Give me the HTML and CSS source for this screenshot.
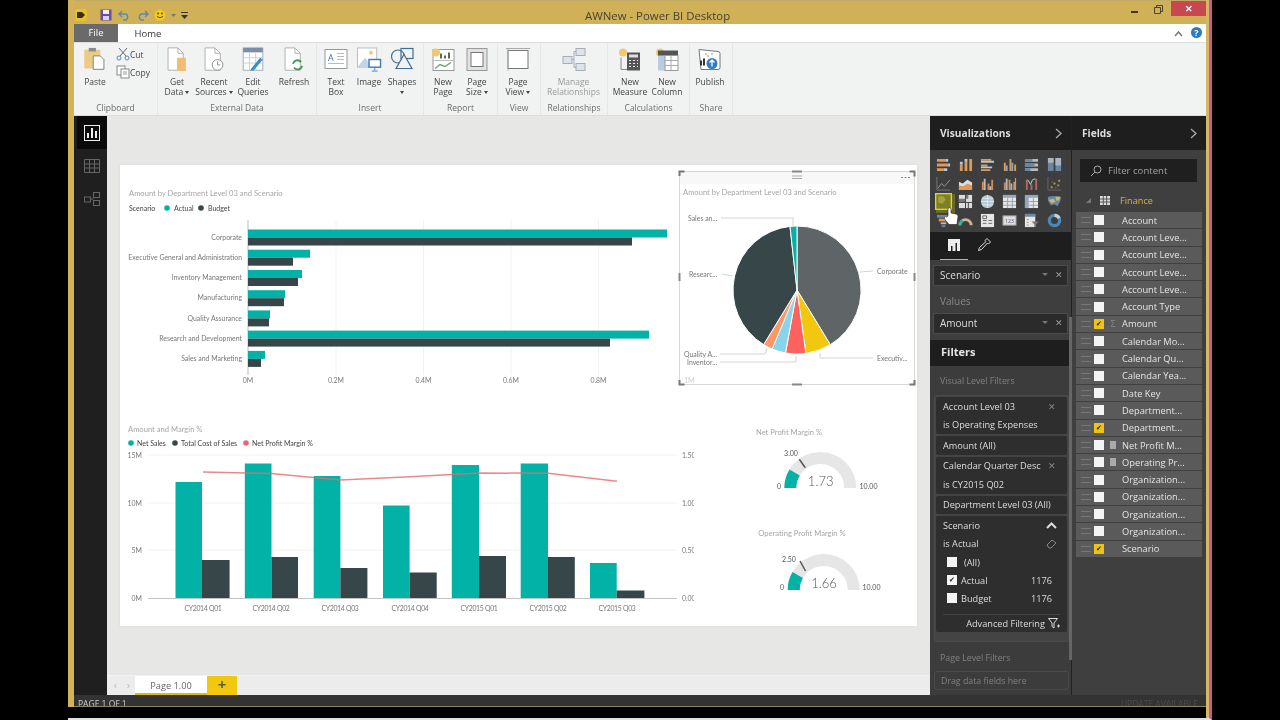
FILE: index.html
```html
<!DOCTYPE html>
<html lang="en">
<head>
  <meta charset="UTF-8">
  <title>AWNew - Power BI Desktop</title>
  <link rel="stylesheet" href="styles.css">
</head>
<body>
<div class="shell">
  <div class="frame">

    <header class="titlebar">
      <div class="qat">
        <svg class="qat-app" width="12" height="12" viewBox="0 0 12 12"><rect width="12" height="12" rx="2" fill="#e8c22e"/><path d="M2 3h5l3 3-3 3H2z" fill="#3a2f10"/></svg>
        <svg class="qat-save" width="12" height="12" viewBox="0 0 12 12"><rect x=".5" y=".5" width="11" height="11" fill="#6a4fa0"/><rect x="3" y="1" width="6" height="4" fill="#eee"/><rect x="3" y="7" width="6" height="4" fill="#d8d0e8"/></svg>
        <svg class="qat-btn" width="13" height="11" viewBox="0 0 13 11"><path d="M4 1L1 4l3 3M1 4h7a3.5 3.5 0 0 1 0 6H5" fill="none" stroke="#5a8ab8" stroke-width="1.5"/></svg>
        <svg class="qat-btn" width="13" height="11" viewBox="0 0 13 11"><path d="M9 1l3 3-3 3M12 4H5a3.5 3.5 0 0 0 0 6h3" fill="none" stroke="#5a8ab8" stroke-width="1.5"/></svg>
        <svg class="qat-btn" width="12" height="12" viewBox="0 0 12 12"><circle cx="6" cy="6" r="5.5" fill="#f4c91e"/><circle cx="4" cy="4.5" r=".9" fill="#5a4a10"/><circle cx="8" cy="4.5" r=".9" fill="#5a4a10"/><path d="M3 7.5q3 2.5 6 0" fill="none" stroke="#5a4a10"/></svg>
        <svg class="qat-caret" width="5" height="3" viewBox="0 0 5 3"><path d="M0 0h5L2.5 3z" fill="#777"/></svg>
        <svg class="qat-more" width="7" height="7" viewBox="0 0 7 7"><path d="M0 0h7v1H0zM0 3h7L3.5 7z" fill="#333"/></svg>
      </div>
      <div class="win-title">AWNew - Power BI Desktop</div>
      <div class="win-btns">
        <span class="win-min"></span>
        <svg class="win-restore" width="9" height="9" viewBox="0 0 9 9"><path d="M2.5 2V.5h6v6H7M.5 2.5h6v6h-6z" fill="none" stroke="#4a4430"/></svg>
        <span class="win-close">&#10005;</span>
      </div>
    </header>

    <nav class="tabs">
      <span class="tab tab-file">File</span>
      <span class="tab tab-home">Home</span>
      <svg class="tabs-chev" width="9" height="6" viewBox="0 0 9 6"><path d="M1 5l3.5-4L8 5" fill="none" stroke="#777" stroke-width="1.5"/></svg>
      <span class="help">?</span>
    </nav>

    <section class="ribbon">
      <div class="group g-clip">
        <div class="btns">
          <div class="btn w42">
            <svg width="26" height="28" viewBox="0 0 26 28"><rect x="1" y="3" width="18" height="21" rx="1" fill="#eccb85"/><rect x="6" y="1" width="8" height="4" fill="#8a8a8a"/><path d="M11 10h8l4 4v11H11z" fill="#fff" stroke="#777"/></svg>
            <span>Paste</span>
          </div>
          <div class="mini">
            <div class="mini-row"><svg width="14" height="14" viewBox="0 0 14 14"><path d="M3 1l7 8M11 1L4 9" stroke="#666" fill="none"/><circle cx="3" cy="11" r="2" fill="none" stroke="#5a8ab8"/><circle cx="11" cy="11" r="2" fill="none" stroke="#5a8ab8"/></svg><span>Cut</span></div>
            <div class="mini-row"><svg width="14" height="14" viewBox="0 0 14 14"><rect x="1" y="1" width="8" height="9" fill="#fff" stroke="#888"/><rect x="5" y="4" width="8" height="9" fill="#fff" stroke="#888"/><path d="M7 7h4M7 9h4" stroke="#999"/></svg><span>Copy</span></div>
          </div>
        </div>
        <div class="group-name">Clipboard</div>
      </div>

      <div class="group g-ext">
        <div class="btns">
          <div class="btn w38">
            <svg width="24" height="28" viewBox="0 0 24 28"><path d="M2 1h11l6 6v19H2z" fill="#fff" stroke="#aaa"/><path d="M13 1v6h6" fill="none" stroke="#aaa"/><rect x="12" y="12" width="10" height="15" rx="1" fill="#ecbf75"/></svg>
            <span>Get<br>Data <i class="dd"></i></span>
          </div>
          <div class="btn w36">
            <svg width="24" height="28" viewBox="0 0 24 28"><path d="M2 1h11l6 6v19H2z" fill="#fff" stroke="#aaa"/><path d="M13 1v6h6" fill="none" stroke="#aaa"/><circle cx="16" cy="20" r="6" fill="#fff" stroke="#888"/><path d="M16 16v4h3" fill="none" stroke="#888"/></svg>
            <span>Recent<br>Sources <i class="dd"></i></span>
          </div>
          <div class="btn w42">
            <svg width="24" height="28" viewBox="0 0 24 28"><rect x="1" y="1" width="22" height="25" fill="#fff" stroke="#9aa8b8"/><rect x="1" y="1" width="22" height="5" fill="#7a8ea8"/><path d="M1 12h22M1 18h22M8 6v20M15 6v20" stroke="#c4cdd8"/><path d="M10 24l10-12 3 2-10 12-4 1z" fill="#3f8fc4"/></svg>
            <span>Edit<br>Queries</span>
          </div>
          <div class="btn w40">
            <svg width="24" height="28" viewBox="0 0 24 28"><path d="M2 1h11l6 6v19H2z" fill="#fff" stroke="#aaa"/><path d="M13 1v6h6" fill="none" stroke="#aaa"/><path d="M11 19a5 5 0 0 1 9-2M21 21a5 5 0 0 1-9 2" fill="none" stroke="#3e9a58" stroke-width="2"/></svg>
            <span>Refresh</span>
          </div>
        </div>
        <div class="group-name">External Data</div>
      </div>

      <div class="group g-ins">
        <div class="btns">
          <div class="btn w38">
            <svg width="24" height="24" viewBox="0 0 24 24"><rect x="1" y="2" width="22" height="19" fill="#fff" stroke="#999"/><text x="4" y="13" class="tb-a">A</text><path d="M13 6h7M13 9h7M13 12h7M4 16h16" stroke="#bbb"/></svg>
            <span>Text<br>Box</span>
          </div>
          <div class="btn w28">
            <svg width="26" height="26" viewBox="0 0 26 26"><rect x="1" y="1" width="20" height="20" fill="#fff" stroke="#bbb"/><circle cx="15" cy="6" r="2" fill="#eecb7a"/><path d="M1 21l8-10 7 10z" fill="#c4d4e4"/><rect x="13" y="13" width="12" height="8" fill="#fff" stroke="#3f7fb4" stroke-width="1.5"/><path d="M19 21v3M16 25h6" stroke="#3f7fb4"/></svg>
            <span>Image</span>
          </div>
          <div class="btn w38">
            <svg width="24" height="24" viewBox="0 0 24 24"><circle cx="8" cy="9" r="6.5" fill="none" stroke="#3f6f94" stroke-width="1.2"/><rect x="11" y="1" width="12" height="10" fill="none" stroke="#3f6f94" stroke-width="1.2"/><path d="M14 7l8 14H6z" fill="#f1f1f1" stroke="#3f6f94" stroke-width="1.2"/></svg>
            <span>Shapes<br><i class="dd"></i></span>
          </div>
        </div>
        <div class="group-name">Insert</div>
      </div>

      <div class="group g-rep">
        <div class="btns">
          <div class="btn w38">
            <svg width="24" height="24" viewBox="0 0 24 24"><rect x="2" y="2" width="21" height="21" fill="#fff" stroke="#999"/><circle cx="5" cy="5" r="4" fill="#f0c870"/><path d="M10 11V6M14 11V8M18 11V5" stroke="#5a6a50" stroke-width="2"/><path d="M2 13h21" stroke="#bbb"/><path d="M4 21l5-4 5 2 6-4" fill="none" stroke="#6aa870" stroke-width="1.5"/></svg>
            <span>New<br>Page</span>
          </div>
          <div class="btn w30">
            <svg width="22" height="24" viewBox="0 0 22 24"><rect x="1" y="1" width="20" height="22" fill="#e2e2e2" stroke="#999"/><rect x="5" y="5" width="12" height="14" fill="#fff" stroke="#777"/></svg>
            <span>Page<br>Size <i class="dd"></i></span>
          </div>
        </div>
        <div class="group-name">Report</div>
      </div>

      <div class="group g-view">
        <div class="btns">
          <div class="btn w40">
            <svg width="24" height="24" viewBox="0 0 24 24"><rect x="2" y="3" width="20" height="18" fill="#fff" stroke="#777"/><path d="M0 1h24M2 1v22" stroke="#aaa"/></svg>
            <span>Page<br>View <i class="dd"></i></span>
          </div>
        </div>
        <div class="group-name">View</div>
      </div>

      <div class="group g-rel">
        <div class="btns">
          <div class="btn w65 off">
            <svg width="24" height="24" viewBox="0 0 24 24"><rect x="1" y="9" width="9" height="7" fill="#dde3ea" stroke="#aab"/><rect x="14" y="1" width="9" height="7" fill="#dde3ea" stroke="#aab"/><rect x="14" y="16" width="9" height="7" fill="#dde3ea" stroke="#aab"/><path d="M10 12h2V4h2M12 12v8h2" fill="none" stroke="#aab"/></svg>
            <span>Manage<br>Relationships</span>
          </div>
        </div>
        <div class="group-name">Relationships</div>
      </div>

      <div class="group g-calc">
        <div class="btns">
          <div class="btn w44">
            <svg width="24" height="24" viewBox="0 0 24 24"><circle cx="5" cy="5" r="4" fill="#f0c870"/><path d="M3 10v12h8" fill="none" stroke="#888"/><rect x="9" y="5" width="13" height="18" fill="#555"/><rect x="11" y="7" width="9" height="3" fill="#dde"/><path d="M11 13h2M15 13h2M19 13h1M11 16h2M15 16h2M19 16h1M11 19h2M15 19h2M19 19h1" stroke="#eee"/></svg>
            <span>New<br>Measure</span>
          </div>
          <div class="btn w30">
            <svg width="24" height="24" viewBox="0 0 24 24"><circle cx="5" cy="5" r="4" fill="#f0c870"/><rect x="3" y="8" width="7" height="15" fill="#b8cbe0"/><rect x="3" y="3" width="20" height="5" fill="#555"/><rect x="10" y="8" width="13" height="15" fill="#fff" stroke="#999"/><path d="M10 13h13M10 18h13M16 8v15" stroke="#aaa"/></svg>
            <span>New<br>Column</span>
          </div>
        </div>
        <div class="group-name">Calculations</div>
      </div>

      <div class="group g-share">
        <div class="btns">
          <div class="btn w40">
            <svg width="24" height="24" viewBox="0 0 24 24"><path d="M1 2l19 2q2 0 2 2v14q0 2-2 2H3z" fill="#fff" stroke="#777"/><path d="M3 13v5M6 11v7" stroke="#333" stroke-width="2"/><circle cx="14" cy="16" r="5.5" fill="#2f7fbf"/><path d="M14 19v-6M11.5 15l2.5-2.5 2.5 2.5" fill="none" stroke="#fff" stroke-width="1.3"/><path d="M10 8v1M14 6v1M8 6v1" stroke="#333"/></svg>
            <span>Publish</span>
          </div>
        </div>
        <div class="group-name">Share</div>
      </div>
    </section>

    <main class="main">
      <aside class="rail">
        <div class="rail-item active">
          <svg width="16" height="16" viewBox="0 0 16 16"><rect x=".5" y=".5" width="15" height="15" fill="none" stroke="#eee"/><path d="M4 13V8M8 13V3M12 13V6" stroke="#eee" stroke-width="2"/></svg>
        </div>
        <div class="rail-item">
          <svg width="16" height="14" viewBox="0 0 16 14"><path d="M.5.5h15v13H.5zM.5 5h15M.5 9h15M5.5.5v13M10.5.5v13" fill="none" stroke="#666"/></svg>
        </div>
        <div class="rail-item">
          <svg width="16" height="14" viewBox="0 0 16 14"><rect x=".5" y="5" width="6" height="5" fill="none" stroke="#666"/><rect x="9.5" y=".5" width="6" height="5" fill="none" stroke="#666"/><rect x="9.5" y="8.5" width="6" height="5" fill="none" stroke="#666"/><path d="M6.5 7h3" stroke="#666"/></svg>
        </div>
      </aside>

      <div class="canvas">
        <div class="page">
          <div class="page-row">
            <svg class="chart-bars" width="558" height="230" viewBox="120 165 558 230">
              <text x="129" y="196" class="t-title">Amount by Department Level 03 and Scenario</text>
              <text x="129" y="211" class="t-leg">Scenario</text>
              <circle cx="167" cy="208" r="2.8" fill="#03b2a7"/>
              <text x="174" y="211" class="t-leg">Actual</text>
              <circle cx="201" cy="208" r="2.8" fill="#374649"/>
              <text x="208" y="211" class="t-leg">Budget</text>
              <path d="M336 220v155M423.5 220v155M511 220v155M598.5 220v155" stroke="#f2f2f2"/>
              <path d="M248 220v155" stroke="#bbb"/>
              <g fill="#03b2a7">
                <rect x="248" y="229.5" width="419" height="8"/>
                <rect x="248" y="249.7" width="62" height="8"/>
                <rect x="248" y="270" width="54" height="8"/>
                <rect x="248" y="290.2" width="37" height="8"/>
                <rect x="248" y="310.4" width="22" height="8"/>
                <rect x="248" y="330.6" width="401" height="8"/>
                <rect x="248" y="350.9" width="17" height="8"/>
              </g>
              <g fill="#374649">
                <rect x="248" y="237.5" width="384" height="8"/>
                <rect x="248" y="257.7" width="45" height="8"/>
                <rect x="248" y="278" width="50" height="8"/>
                <rect x="248" y="298.2" width="36" height="8"/>
                <rect x="248" y="318.4" width="21" height="8"/>
                <rect x="248" y="338.6" width="362" height="8"/>
                <rect x="248" y="358.9" width="13" height="8"/>
              </g>
              <g class="t-axis" text-anchor="end">
                <text x="242" y="240">Corporate</text>
                <text x="242" y="260">Executive General and Administration</text>
                <text x="242" y="280">Inventory Management</text>
                <text x="242" y="300">Manufacturing</text>
                <text x="242" y="321">Quality Assurance</text>
                <text x="242" y="341">Research and Development</text>
                <text x="242" y="361">Sales and Marketing</text>
              </g>
              <g class="t-axis" text-anchor="middle">
                <text x="248" y="383">0M</text>
                <text x="336" y="383">0.2M</text>
                <text x="423.5" y="383">0.4M</text>
                <text x="511" y="383">0.6M</text>
                <text x="598.5" y="383">0.8M</text>
              </g>
            </svg>

            <svg class="chart-pie" width="239" height="230" viewBox="678 165 239 230">
              <rect x="679.5" y="171.5" width="235" height="213" fill="#fff" stroke="#d8d8d8"/>
              <rect x="680" y="172" width="234" height="12" fill="#f8f8f8"/>
              <path d="M679.5 176v-4.5h5M909.5 171.5h5v5M914.5 380v4.5h-5M684.5 384.5h-5V380" fill="none" stroke="#777" stroke-width="2"/>
              <path d="M792 171.5h10M679.5 273v8M914.5 273v8M792 384.5h10" stroke="#888" stroke-width="2"/>
              <path d="M792 176h10M792 178.5h10" stroke="#aaa"/>
              <path d="M901 177.5h2M904.5 177.5h2M908 177.5h2" stroke="#888"/>
              <text x="683" y="195" class="t-title">Amount by Department Level 03 and Scenario</text>
              <g stroke="#fff" stroke-width="1">
                <path d="M797 290V226A64 64 0 0 1 830.3 344.7Z" fill="#5f6566"/>
                <path d="M797 290L830.3 344.7A64 64 0 0 1 805.9 353.4Z" fill="#f2c80f"/>
                <path d="M797 290L805.9 353.4A64 64 0 0 1 785.5 353Z" fill="#fd625e"/>
                <path d="M797 290L785.5 353A64 64 0 0 1 772.1 349Z" fill="#8ad4eb"/>
                <path d="M797 290L772.1 349A64 64 0 0 1 763.6 344.6Z" fill="#fe9666"/>
                <path d="M797 290L763.6 344.6A64 64 0 0 1 790 226.4Z" fill="#374649"/>
                <path d="M797 290L790 226.4A64 64 0 0 1 797 226Z" fill="#03b2a7"/>
              </g>
              <path d="M721 218h72v8M860 272l13-1M722 274l11 2M820 353v5h53M720 354h45l2-6M720 362h76v-6" fill="none" stroke="#d4d4d4"/>
              <g class="t-axis">
                <text x="688" y="221">Sales an...</text>
                <text x="877" y="274">Corporate</text>
                <text x="689" y="277">Researc...</text>
                <text x="877" y="361">Executiv...</text>
                <text x="684" y="357">Quality A...</text>
                <text x="687" y="365">Inventor...</text>
              </g>
              <text x="684" y="383" class="t-faint">1M</text>
            </svg>
          </div>

          <div class="page-row">
            <svg class="chart-cols" width="574" height="231" viewBox="120 395 574 231">
              <text x="128" y="432" class="t-title">Amount and Margin %</text>
              <circle cx="131" cy="443" r="2.8" fill="#03b2a7"/>
              <text x="137" y="446" class="t-leg">Net Sales</text>
              <circle cx="175" cy="443" r="2.8" fill="#374649"/>
              <text x="181" y="446" class="t-leg">Total Cost of Sales</text>
              <circle cx="246" cy="443" r="2.8" fill="#e66c6c"/>
              <text x="252" y="446" class="t-leg">Net Profit Margin %</text>
              <path d="M148 455h529M148 503h529M148 550h529" stroke="#f2f2f2"/>
              <path d="M148 598.5h529" stroke="#c4c4c4"/>
              <g fill="#03b2a7">
                <rect x="175.5" y="482" width="26.5" height="116"/>
                <rect x="244.8" y="463.5" width="26.7" height="134.5"/>
                <rect x="313.7" y="476" width="26.7" height="122"/>
                <rect x="383" y="505.5" width="26.6" height="92.5"/>
                <rect x="451.8" y="465" width="27.2" height="133"/>
                <rect x="520.7" y="463.5" width="27.3" height="134.5"/>
                <rect x="590" y="563" width="26.7" height="35"/>
              </g>
              <g fill="#374649">
                <rect x="202" y="560" width="27.6" height="38"/>
                <rect x="271.5" y="557" width="26.5" height="41"/>
                <rect x="340.4" y="568" width="27" height="30"/>
                <rect x="409.6" y="572.5" width="27.1" height="25.5"/>
                <rect x="479" y="556" width="27" height="42"/>
                <rect x="548" y="557" width="26.8" height="41"/>
                <rect x="616.7" y="590.5" width="27.7" height="7.5"/>
              </g>
              <path d="M203 472L271 473.5 340 480 410 476.8 479 473 548 473.3 617 481.3" fill="none" stroke="#e66c6c" stroke-width="1.5" opacity=".8"/>
              <g class="t-axis" text-anchor="end">
                <text x="142" y="458">15M</text>
                <text x="142" y="506">10M</text>
                <text x="142" y="553">5M</text>
                <text x="142" y="601">0M</text>
              </g>
              <g class="t-axis">
                <text x="682" y="458">1.50</text>
                <text x="682" y="506">1.00</text>
                <text x="682" y="553">0.50</text>
                <text x="682" y="601">0.00</text>
              </g>
              <g class="t-axis t-cat" text-anchor="middle">
                <text x="203" y="611">CY2014 Q01</text>
                <text x="271" y="611">CY2014 Q02</text>
                <text x="340" y="611">CY2014 Q03</text>
                <text x="410" y="611">CY2014 Q04</text>
                <text x="479" y="611">CY2015 Q01</text>
                <text x="548" y="611">CY2015 Q02</text>
                <text x="617" y="611">CY2015 Q03</text>
              </g>
            </svg>

            <svg class="chart-gauges" width="223" height="231" viewBox="694 395 223 231">
              <text x="789" y="435" class="t-title" text-anchor="middle">Net Profit Margin %</text>
              <path d="M790.3 488A30 30 0 0 1 850.3 488" fill="none" stroke="#e6e6e6" stroke-width="12" pathLength="10"/>
              <path d="M790.3 488A30 30 0 0 1 850.3 488" fill="none" stroke="#03b2a7" stroke-width="12" pathLength="10" stroke-dasharray="1.73 10"/>
              <path d="M799.3 459.3L805.3 467.7" stroke="#555" stroke-width="1.5"/>
              <text x="791" y="456" class="t-gauge" text-anchor="middle">3.00</text>
              <text x="779" y="489" class="t-gauge" text-anchor="middle">0</text>
              <text x="868.5" y="489" class="t-gauge" text-anchor="middle">10.00</text>
              <text x="820.7" y="486" class="t-val" text-anchor="middle">1.73</text>

              <text x="802" y="536" class="t-title" text-anchor="middle">Operating Profit Margin %</text>
              <path d="M793.7 590A30 30 0 0 1 853.7 590" fill="none" stroke="#e6e6e6" stroke-width="12" pathLength="10"/>
              <path d="M793.7 590A30 30 0 0 1 853.7 590" fill="none" stroke="#03b2a7" stroke-width="12" pathLength="10" stroke-dasharray="1.66 10"/>
              <path d="M800 561L805.5 571" stroke="#555" stroke-width="1.5"/>
              <text x="789" y="562" class="t-gauge" text-anchor="middle">2.50</text>
              <text x="782" y="590" class="t-gauge" text-anchor="middle">0</text>
              <text x="871.5" y="590" class="t-gauge" text-anchor="middle">10.00</text>
              <text x="824" y="588" class="t-val" text-anchor="middle">1.66</text>
            </svg>
          </div>
        </div>

        <div class="pagebar">
          <span class="page-arrow">&#8249;</span>
          <span class="page-arrow">&#8250;</span>
          <span class="page-tab">Page 1.00</span>
          <span class="page-add">+</span>
        </div>
      </div>

      <section class="viz">
        <div class="pane-head">Visualizations
          <svg width="7" height="11" viewBox="0 0 7 11"><path d="M1 1l5 4.5L1 10" fill="none" stroke="#aaa" stroke-width="1.3"/></svg>
        </div>

        <div class="gallery">
          <svg viewBox="0 0 16 16"><path d="M1 2h9v3H1zM1 7h12v3H1zM1 12h7v3H1z" fill="#dc9a58"/><path d="M10 2h3v3h-3zM13 7h2v3h-2zM8 12h4v3H8z" fill="#b9c6d4"/></svg>
          <svg viewBox="0 0 16 16"><path d="M2 8h3v7H2zM7 5h3v10H7zM12 2h3v13h-3z" fill="#dc9a58"/><path d="M2 5h3v3H2zM7 2h3v3H7z" fill="#b9c6d4"/></svg>
          <svg viewBox="0 0 16 16"><path d="M1 2h11v2H1zM1 8h7v2H1zM1 13h10v2H1z" fill="#dc9a58"/><path d="M1 4h14v2H1zM1 10h12v2H1z" fill="#b9c6d4"/></svg>
          <svg viewBox="0 0 16 16"><path d="M2 6h2v9H2zM8 2h2v13H8zM13 8h2v7h-2z" fill="#dc9a58"/><path d="M4 9h2v6H4zM10 6h2v9h-2z" fill="#8fa8c0"/></svg>
          <svg viewBox="0 0 16 16"><path d="M1 2h14v3H1zM1 7h14v3H1zM1 12h14v3H1z" fill="#bbb"/><path d="M1 2h8v3H1zM1 7h10v3H1zM1 12h6v3H1z" fill="#6a88a6"/></svg>
          <svg viewBox="0 0 16 16"><path d="M1 1h6v14H1zM9 1h6v14H9z" fill="#6a88a6"/><path d="M1 1h6v5H1zM9 1h6v8H9z" fill="#a8b6c4"/></svg>

          <svg viewBox="0 0 16 16"><path d="M1 1v14h14" fill="none" stroke="#777"/><path d="M2 13l4-5 3 3 6-7" fill="none" stroke="#999"/></svg>
          <svg viewBox="0 0 16 16"><path d="M1 15V6l4 2 5-4 5 3v8z" fill="#ddd"/><path d="M1 15v-5l5 1 4-3 5 2v5z" fill="#dc9a58"/></svg>
          <svg viewBox="0 0 16 16"><path d="M2 6h2v9H2zM8 8h2v7H8zM12 4h2v11h-2z" fill="#d08c50"/><path d="M4 3h2v12H4zM10 11h2v4h-2z" fill="#bbb"/></svg>
          <svg viewBox="0 0 16 16"><path d="M2 7h2v8H2zM7 4h2v11H7zM12 6h2v9h-2z" fill="#d08c50"/><path d="M4 3h2v12H4zM9 8h2v7H9zM14 2h1v13h-1z" fill="#a8b6c4"/></svg>
          <svg viewBox="0 0 16 16"><path d="M2 4h2v11H2zM7 9h2v6H7zM12 3h2v12h-2z" fill="#b06a60"/><path d="M4 4l3 5 2-5 3-1" fill="none" stroke="#ccc"/></svg>
          <svg viewBox="0 0 16 16"><path d="M1 1v14h14" fill="none" stroke="#666"/><path d="M4 11h2v2H4zM7 7h2v2H7zM11 9h2v2h-2zM12 4h2v2h-2z" fill="#b8964f"/><path d="M5 6h1v1H5zM9 12h1v1H9z" fill="#8fa8c0"/></svg>

          <svg class="picked" viewBox="0 0 16 16"><rect x=".5" y=".5" width="15" height="15" fill="#7f7f26" stroke="#d9d834" stroke-width="1.5"/><path d="M3 3h5l2 3-3 4-4-1z" fill="#a3a33a"/></svg>
          <svg viewBox="0 0 16 16"><rect x="1" y="1" width="14" height="14" fill="#ddd"/><path d="M1 5h7v4H1zM8 1h3v4H8z" fill="#777"/><path d="M8 1v14M1 9h14M11 9v6" stroke="#3d3d3d"/></svg>
          <svg viewBox="0 0 16 16"><circle cx="8" cy="8" r="7" fill="#b4cad8"/><path d="M1 8h14M2 4.5h12M2 11.5h12M8 1v14" stroke="#e4e4e4"/></svg>
          <svg viewBox="0 0 16 16"><rect x="1" y="1" width="14" height="14" fill="#e6e6e6"/><rect x="1" y="1" width="14" height="3" fill="#8fa8c0"/><path d="M1 8h14M1 12h14M6 4v11M11 4v11" stroke="#8fa4b8"/></svg>
          <svg viewBox="0 0 16 16"><rect x="1" y="1" width="14" height="14" fill="#e6e6e6"/><path d="M1 1h14v3H1zM1 4h4v11H1z" fill="#8fa8c0"/><path d="M5 8h10M5 12h10M10 4v11" stroke="#8fa4b8"/></svg>
          <svg viewBox="0 0 16 16"><path d="M1 3l6-1 8 1-1 5-3 5-3-2-4 1-3-5z" fill="#6a88a6"/><path d="M2 6l5-1 2 3-4 2zM9 3h5l-1 4h-3z" fill="#c8bb6a"/></svg>

          <svg viewBox="0 0 16 16"><path d="M1 2h14v3H1z" fill="#6a88a6"/><path d="M3 6h10v3H3z" fill="#dc9a58"/><path d="M5 10h6v2H5z" fill="#bbb"/><path d="M6 13h4v2H6z" fill="#6a88a6"/></svg>
          <svg viewBox="0 0 16 16"><path d="M2 13a6 6 0 0 1 12 0" fill="none" stroke="#c8b88a" stroke-width="3"/><path d="M2 13a6 6 0 0 1 3-5" fill="none" stroke="#3aa8a0" stroke-width="3"/></svg>
          <svg viewBox="0 0 16 16"><rect x="1" y="1" width="14" height="14" fill="#e6e6e6"/><path d="M3 3h4v3H3zM3 8h4M3 11h4M9 8h4M9 11h4" stroke="#666" fill="none"/></svg>
          <svg viewBox="0 0 16 16"><rect x="1" y="3" width="14" height="10" fill="#ddd" stroke="#999"/><text x="8" y="10.5" class="t-123" text-anchor="middle">123</text></svg>
          <svg viewBox="0 0 16 16"><rect x="1" y="1" width="11" height="14" fill="#e6e6e6"/><rect x="1" y="1" width="11" height="3" fill="#6a88a6"/><path d="M3 7h2M3 10h2M3 13h2" stroke="#b8964f"/><path d="M8 9h8l-3 3v3h-2v-3z" fill="#777"/></svg>
          <svg viewBox="0 0 16 16"><circle cx="8" cy="8" r="5.5" fill="none" stroke="#4f86b8" stroke-width="3.5"/><path d="M8 2.5a5.5 5.5 0 0 1 5 3" fill="none" stroke="#c4d0dc" stroke-width="3.5"/></svg>

          <svg class="hand" viewBox="0 0 14 18"><path d="M4 9V2c0-1.800 3-1.800 3 0v4l5 1c1.500.4 2 1.200 2 2.500L13 17.500H5L.5 12c-1-1.500.8-3.200 2-2z" fill="#fff" stroke="#222" stroke-width=".6"/></svg>
        </div>

        <div class="viz-tabs">
          <span class="viz-tab on">
            <svg width="12" height="12" viewBox="0 0 12 12"><path d="M0 0h12v12H0z" fill="#eee"/><path d="M3 12V7h1.5v5zM7.500 12V4H9v8z" fill="#1e1e1e"/></svg>
          </span>
          <span class="viz-tab">
            <svg width="16" height="16" viewBox="0 0 16 16"><path d="M11 1.5l3.5 3.5-2 2-1-1-6 6.5-3 1 1-3 6.5-6-1-1z" fill="none" stroke="#ddd"/></svg>
          </span>
        </div>

        <div class="wells">
          <div class="well-field"><span>Scenario</span><i class="dd-dark"></i><b>&#10005;</b></div>
          <div class="well-label">Values</div>
          <div class="well-field"><span>Amount</span><i class="dd-dark"></i><b>&#10005;</b></div>
        </div>

        <div class="filters-head">Filters</div>

        <div class="filters">
          <div class="f-label">Visual Level Filters</div>
          <div class="f-well">
            <div class="f-card">
              <div class="f-line">Account Level 03<b>&#10005;</b></div>
              <div class="f-line">is Operating Expenses</div>
            </div>
            <div class="f-card"><div class="f-line">Amount (All)</div></div>
            <div class="f-card">
              <div class="f-line">Calendar Quarter Desc<b>&#10005;</b></div>
              <div class="f-line">is CY2015 Q02</div>
            </div>
            <div class="f-card"><div class="f-line">Department Level 03 (All)</div></div>
            <div class="f-card f-open">
              <div class="f-line">Scenario
                <svg width="11" height="7" viewBox="0 0 11 7"><path d="M1 6l4.5-4.5L10 6" fill="none" stroke="#ddd" stroke-width="2"/></svg>
              </div>
              <div class="f-line">is Actual
                <svg width="11" height="10" viewBox="0 0 11 10"><path d="M1 6l5-5 4 3-5 5H3z" fill="none" stroke="#888"/></svg>
              </div>
              <div class="f-check"><i class="box"></i><span class="f-all">(All)</span></div>
              <div class="f-check"><i class="box checked">&#10004;</i><span>Actual</span><em>1176</em></div>
              <div class="f-check"><i class="box"></i><span>Budget</span><em>1176</em></div>
              <div class="f-adv">Advanced Filtering
                <svg width="12" height="11" viewBox="0 0 12 11"><path d="M.5.5h9L6 5v5L4 8.5V5zM9 8h3M10.5 6.5v3" fill="none" stroke="#ddd"/></svg>
              </div>
            </div>
          </div>
          <div class="f-label f-page">Page Level Filters</div>
          <div class="f-drop">Drag data fields here</div>
          <div class="f-scroll"></div>
        </div>
      </section>

      <section class="fields">
        <div class="pane-head">Fields
          <svg width="7" height="11" viewBox="0 0 7 11"><path d="M1 1l5 4.5L1 10" fill="none" stroke="#aaa" stroke-width="1.3"/></svg>
        </div>
        <div class="search">
          <svg width="12" height="12" viewBox="0 0 12 12"><circle cx="7.5" cy="4.5" r="3.5" fill="none" stroke="#aaa"/><path d="M5 7l-4 4" stroke="#aaa"/></svg>
          <span>Filter content</span>
        </div>
        <div class="table-row">
          <svg width="5" height="5" viewBox="0 0 5 5"><path d="M5 0v5H0z" fill="#777"/></svg>
          <svg width="10" height="9" viewBox="0 0 10 9"><rect width="10" height="9" fill="#ddd"/><path d="M0 3h10M0 6h10M3.3 0v9M6.6 0v9" stroke="#555"/></svg>
          <span>Finance</span>
        </div>
        <ul class="field-list">
          <li><i class="box"></i><i class="kind"></i>Account</li>
          <li><i class="box"></i><i class="kind"></i>Account Leve...</li>
          <li><i class="box"></i><i class="kind"></i>Account Leve...</li>
          <li><i class="box"></i><i class="kind"></i>Account Leve...</li>
          <li><i class="box"></i><i class="kind"></i>Account Leve...</li>
          <li><i class="box"></i><i class="kind"></i>Account Type</li>
          <li><i class="box on">&#10004;</i><i class="kind sum">&Sigma;</i>Amount</li>
          <li><i class="box"></i><i class="kind"></i>Calendar Mo...</li>
          <li><i class="box"></i><i class="kind"></i>Calendar Qu...</li>
          <li><i class="box"></i><i class="kind"></i>Calendar Yea...</li>
          <li><i class="box"></i><i class="kind"></i>Date Key</li>
          <li><i class="box"></i><i class="kind"></i>Department...</li>
          <li><i class="box on">&#10004;</i><i class="kind"></i>Department...</li>
          <li><i class="box"></i><i class="kind calc"></i>Net Profit M...</li>
          <li><i class="box"></i><i class="kind calc"></i>Operating Pr...</li>
          <li><i class="box"></i><i class="kind"></i>Organization...</li>
          <li><i class="box"></i><i class="kind"></i>Organization...</li>
          <li><i class="box"></i><i class="kind"></i>Organization...</li>
          <li><i class="box"></i><i class="kind"></i>Organization...</li>
          <li><i class="box on">&#10004;</i><i class="kind"></i>Scenario</li>
        </ul>
      </section>
    </main>

    <footer class="status">
      <span>PAGE 1 OF 1</span>
      <span class="status-update">UPDATE AVAILABLE</span>
    </footer>
  </div>
  <div class="blackbar"></div>
</div>
</body>
</html>
```

FILE: styles.css
```css
* {
  box-sizing: border-box;
}

html, body {
  margin: 0;
  height: 100%;
  overflow: hidden;
  background: #000;
}

body {
  font-family: "Open Sans", "Noto Sans", sans-serif;
  font-size: 10px;
  color: #333;
}

i, em {
  font-style: normal;
}

.shell {
  margin-left: 68px;
  width: 1144px;
  height: 720px;
  padding-right: 3px;
  background: #d6b860;
  border-right: 3px solid #c8589c;
  border-bottom: 2px solid #e0e0e0;
  filter: blur(0.35px);
}

.frame {
  width: 1138px;
  height: 707px;
  padding-left: 6px;
  background: #d2b35a;
  display: flex;
  flex-direction: column;
}

.blackbar {
  width: 1138px;
  height: 11px;
  background: #000;
}

/* title bar */
.titlebar {
  height: 24px;
  flex: none;
  display: grid;
  grid-template-columns: 511px auto 1fr;
  align-items: center;
  background: #d0b157;
  border-top: 1px solid #c2aa68;
}

.qat {
  display: flex;
  align-items: center;
  padding-left: 1px;
  padding-top: 5px;
}

.qat-app {
  margin-right: 13px;
}

.qat-save {
  margin-right: 6px;
}

.qat-btn {
  margin-right: 5px;
}

.qat-caret {
  margin-right: 5px;
}

.win-title {
  font-size: 11.4px;
  color: #46432f;
  padding-top: 5px;
}

.win-btns {
  display: flex;
  justify-content: flex-end;
  align-items: flex-start;
  height: 100%;
}

.win-min {
  width: 7px;
  height: 2px;
  background: #3c3520;
  margin-top: 10px;
  margin-right: 16px;
}

.win-restore {
  margin-top: 4px;
  margin-right: 8px;
}

.win-close {
  width: 35px;
  height: 15px;
  background: #c9474f;
  color: #fff;
  font-size: 9px;
  font-weight: 700;
  line-height: 16px;
  text-align: center;
}

/* tabs */
.tabs {
  height: 18px;
  flex: none;
  display: flex;
  align-items: stretch;
  background: #fff;
}

.tab {
  font-size: 9.5px;
  line-height: 18px;
  text-align: center;
}

.tab-file {
  width: 44px;
  background: #6a6a6a;
  color: #fff;
}

.tab-home {
  width: 60px;
  line-height: 20px;
  color: #333;
}

.tabs-chev {
  margin-left: auto;
  margin-top: 7px;
  margin-right: 8px;
}

.help {
  width: 11px;
  height: 11px;
  margin-top: 3px;
  margin-right: 4px;
  border-radius: 50%;
  background: #2a7cc0;
  color: #fff;
  font-size: 9px;
  font-weight: 700;
  line-height: 11px;
  text-align: center;
}

/* ribbon */
.ribbon {
  height: 74px;
  flex: none;
  display: flex;
  background: #f1f2f2;
  border-top: 1px solid #ddd;
  border-bottom: 1px solid #ddd;
}

.group {
  display: flex;
  flex-direction: column;
  padding-top: 4px;
  border-right: 1px solid #e6e6e6;
}

.g-clip { width: 84px; }
.g-ext { width: 159px; }
.g-ins { width: 107px; }
.g-rep { width: 74px; }
.g-view { width: 43px; }
.g-rel { width: 67px; }
.g-calc { width: 82px; }
.g-share { width: 43px; }

.btns {
  flex: 1;
  display: flex;
}

.group-name {
  height: 17px;
  line-height: 19px;
  text-align: center;
  font-size: 8.5px;
  color: #6d6d6d;
}

.btn {
  display: flex;
  flex-direction: column;
  align-items: center;
  font-size: 8.5px;
  line-height: 10px;
  color: #444;
  text-align: center;
  white-space: nowrap;
}

.btn svg {
  height: 25px;
  margin-bottom: 5px;
  flex: none;
}

.btn.off {
  color: #999;
}

.w28 { width: 28px; }
.w30 { width: 30px; }
.w36 { width: 36px; }
.w38 { width: 38px; }
.w40 { width: 40px; }
.w42 { width: 42px; }
.w44 { width: 44px; }
.w65 { width: 65px; }

.tb-a {
  font-size: 9px;
  fill: #4a6f94;
}

.dd {
  display: inline-block;
  width: 0;
  height: 0;
  border-left: 2px solid transparent;
  border-right: 2px solid transparent;
  border-top: 3px solid #444;
  vertical-align: middle;
}

.mini {
  display: flex;
  flex-direction: column;
  gap: 4px;
}

.mini-row {
  display: flex;
  align-items: center;
  font-size: 8.5px;
  color: #444;
}

/* main area */
.main {
  height: 579px;
  flex: none;
  display: flex;
}

.rail {
  width: 33px;
  flex: none;
  background: #1f1f1f;
  padding-left: 3px;
}

.rail-item {
  width: 30px;
  height: 33px;
  display: flex;
  align-items: center;
  justify-content: center;
}

.rail-item.active {
  background: #0a0a0a;
}

.canvas {
  width: 823px;
  flex: none;
  display: flex;
  flex-direction: column;
  background: #e7e8e6;
}

.page {
  width: 797px;
  height: 461px;
  margin: 49px 0 0 13px;
  background: #fff;
  box-shadow: 0 0 2px #d6d6d6;
}

.page-row {
  display: flex;
}

.page-row svg {
  display: block;
  font-family: Lato, "Open Sans", sans-serif;
}

.t-title {
  font-size: 7.6px;
  fill: #a6a6a6;
}

.t-leg {
  font-size: 7px;
  fill: #444;
}

.t-axis {
  font-size: 6.9px;
  fill: #777;
}

.t-cat {
  letter-spacing: -0.3px;
}

.t-faint {
  font-size: 7px;
  fill: #ccc;
}

.t-gauge {
  font-size: 7px;
  fill: #555;
}

.t-val {
  font-size: 13px;
  font-weight: 300;
  fill: #555;
}

.t-123 {
  font-size: 5.5px;
  fill: #557;
}

.pagebar {
  margin-top: auto;
  height: 20px;
  display: flex;
  align-items: stretch;
  background: #ececec;
  border-top: 1px solid #f2f2f2;
  padding-left: 2px;
}

.page-arrow {
  width: 13px;
  text-align: center;
  line-height: 18px;
  font-size: 11px;
  color: #bbb;
}

.page-tab {
  width: 72px;
  background: #fff;
  border-bottom: 2px solid #e0b90c;
  text-align: center;
  line-height: 19px;
  font-size: 9.2px;
  color: #666;
}

.page-add {
  width: 30px;
  background: #f2c80f;
  text-align: center;
  line-height: 17px;
  font-size: 15px;
  font-weight: 700;
  color: #5c5a40;
}

/* shared pane bits */
.pane-head {
  height: 34px;
  flex: none;
  display: flex;
  align-items: center;
  justify-content: space-between;
  padding: 0 9px 0 10px;
  background: #1e1e1e;
  color: #ddd;
  font-size: 10.2px;
  font-weight: 700;
}

.box {
  display: block;
  width: 10px;
  height: 10px;
  flex: none;
  background: #f4f4f4;
  color: #222;
  font-size: 7px;
  line-height: 10px;
  text-align: center;
}

/* visualizations pane */
.viz {
  width: 142px;
  flex: none;
  position: relative;
  display: flex;
  flex-direction: column;
  background: #3c3c3c;
  border-right: 1px solid #222;
}

.gallery {
  height: 82px;
  flex: none;
  position: relative;
  display: grid;
  grid-template-columns: repeat(6, 22.2px);
  grid-auto-rows: 18.7px;
  justify-items: center;
  align-items: center;
  padding: 5px 0 0 2px;
  background: #3e3e3e;
}

.gallery svg {
  width: 15px;
  height: 15px;
}

.gallery .picked {
  width: 17px;
  height: 17px;
  box-shadow: 2px 2px 0 1px #6a6a25;
}

.gallery .hand {
  position: absolute;
  left: 14px;
  top: 57px;
  width: 14px;
  height: 18px;
}

.viz-tabs {
  height: 28px;
  flex: none;
  display: flex;
  padding-left: 10px;
  background: #1e1e1e;
}

.viz-tab {
  width: 28px;
  display: flex;
  align-items: center;
  justify-content: center;
  padding-bottom: 2px;
  margin-right: 2px;
}

.viz-tab.on {
  border-bottom: 1px solid #d8b84a;
}

.wells {
  height: 80px;
  flex: none;
  padding: 6px 4px 0;
  background: #3e3e3e;
}

.well-field {
  height: 19px;
  display: flex;
  align-items: center;
  padding: 0 2px 2px 6px;
  background: #2b2b2b;
  box-shadow: 0 0 0 1px #4a4a4a;
  color: #ddd;
}

.well-field span {
  flex: 1;
}

.well-field b {
  width: 12px;
  margin-left: 5px;
  color: #999;
  font-size: 9px;
  font-weight: 400;
  text-align: center;
}

.dd-dark {
  width: 0;
  height: 0;
  border-left: 3px solid transparent;
  border-right: 3px solid transparent;
  border-top: 3px solid #777;
}

.well-label {
  height: 29px;
  line-height: 32px;
  padding-left: 6px;
  color: #888;
}

.filters-head {
  height: 26px;
  flex: none;
  padding-left: 11px;
  line-height: 24px;
  background: #1e1e1e;
  color: #e6e6e6;
  font-size: 11px;
  font-weight: 700;
}

.filters {
  flex: 1;
  padding: 0 2px 0 4px;
  background: #3c3c3c;
}

.f-label {
  height: 29px;
  line-height: 30px;
  padding-left: 6px;
  color: #808080;
  font-size: 8.8px;
}

.f-well {
  height: 247px;
  padding: 1px;
  background: #444;
  border: 1px solid #4b4b4b;
  border-radius: 2px;
}

.f-card {
  margin-bottom: 2px;
  padding: 0 7px;
  background: #2e2e2e;
  border-radius: 2px;
  color: #ddd;
}

.f-line {
  height: 18.5px;
  display: flex;
  align-items: center;
  justify-content: space-between;
  font-size: 9.2px;
}

.f-line b {
  color: #888;
  font-size: 9px;
  font-weight: 400;
  margin-right: 4px;
}

.f-line svg {
  margin-right: 3px;
}

.f-open {
  height: 116px;
  margin-top: 1px;
}

.f-check {
  height: 18px;
  display: flex;
  align-items: center;
  padding-left: 4px;
  font-size: 9.2px;
}

.f-check span {
  margin-left: 4px;
  flex: 1;
}

.f-check .f-all {
  margin-left: 7px;
}

.f-check em {
  margin-right: 8px;
}

.f-check:first-of-type {
  margin-top: 2px;
}

.f-adv {
  margin-top: 7px;
  height: 18px;
  border-top: 1px solid #444;
  display: flex;
  align-items: center;
  justify-content: flex-end;
  gap: 3px;
  font-size: 9.2px;
}

.f-page {
  height: 28px;
  margin-top: 1px;
}

.f-drop {
  height: 19px;
  line-height: 18px;
  padding-left: 6px;
  border: 1px solid #4b4b4b;
  border-radius: 3px;
  color: #808080;
  font-size: 8.8px;
}

.f-scroll {
  position: absolute;
  right: -1px;
  top: 201px;
  width: 3px;
  height: 343px;
  background: #666;
}

/* fields pane */
.fields {
  flex: 1;
  display: flex;
  flex-direction: column;
  background: #3f3f3f;
}

.search {
  height: 23px;
  margin: 9px 9px 0 8px;
  display: flex;
  align-items: center;
  gap: 6px;
  padding-left: 10px;
  background: #1f1f1f;
  color: #a0a0a0;
  font-size: 9.6px;
}

.table-row {
  height: 18px;
  margin-top: 9px;
  display: flex;
  align-items: center;
  padding-left: 14px;
  color: #d4b44a;
  font-size: 9.2px;
}

.table-row svg:nth-child(2) {
  margin-left: 9px;
  margin-right: 10px;
}

.field-list {
  list-style: none;
  margin: 3px 0 0;
  padding: 0 4px;
}

.field-list li {
  height: 16.3px;
  margin-bottom: 1px;
  display: flex;
  align-items: center;
  padding-left: 5px;
  background: #5a5a5a;
  color: #e4e4e4;
  font-size: 9.3px;
}

.field-list li::before {
  content: "";
  width: 10px;
  height: 4px;
  margin-right: 3px;
  border-top: 1px solid #777;
  border-bottom: 1px solid #777;
}

.box.on {
  background: #eec216;
}

.kind {
  width: 18px;
  flex: none;
  text-align: center;
  color: #888;
  font-size: 9px;
}

.kind.calc::before {
  content: "";
  display: inline-block;
  width: 6px;
  height: 8px;
  background: #aaa;
}

/* status bar */
.status {
  height: 12px;
  flex: none;
  display: flex;
  justify-content: space-between;
  overflow: hidden;
  padding: 3px 8px 0 4px;
  background: #333;
  border-bottom: 1px solid #8a8460;
  color: #ccc;
  font-size: 8.5px;
  line-height: 12px;
}

.status-update {
  color: #4c4c4c;
}
```
